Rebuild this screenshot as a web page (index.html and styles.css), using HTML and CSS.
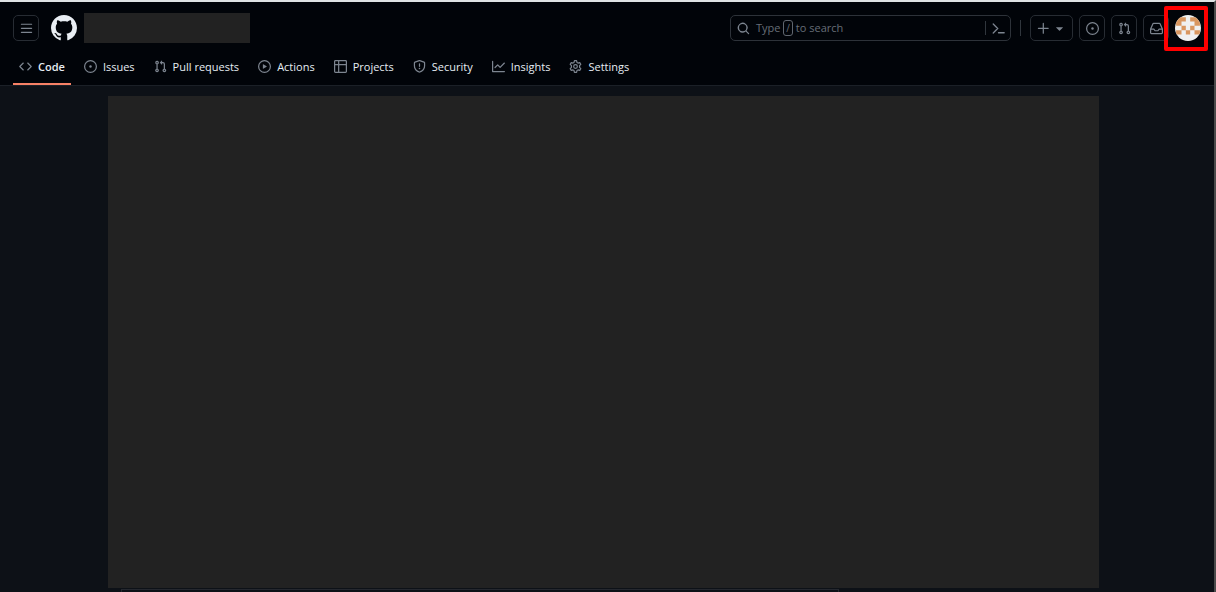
FILE: index.html
```
<!DOCTYPE html>
<html lang="en">
<head>
<meta charset="utf-8">
<title>Repository</title>
<link rel="stylesheet" href="styles.css">
</head>
<body>
<header class="header">
  <div class="topbar">
    <button class="icon-button" aria-label="Open menu"><svg class="icon" viewBox="0 0 16 16"><path d="M1 2.75A.75.75 0 0 1 1.75 2h12.5a.75.75 0 0 1 0 1.5H1.75A.75.75 0 0 1 1 2.75Zm0 5A.75.75 0 0 1 1.75 7h12.5a.75.75 0 0 1 0 1.5H1.75A.75.75 0 0 1 1 7.75ZM1.75 12h12.5a.75.75 0 0 1 0 1.5H1.75a.75.75 0 0 1 0-1.5Z"/></svg></button>
    <a class="logo" href="#" aria-label="Homepage"><svg viewBox="0 0 16 16"><path d="M8 0c4.42 0 8 3.58 8 8a8.013 8.013 0 0 1-5.45 7.59c-.4.08-.55-.17-.55-.38 0-.27.01-1.13.01-2.2 0-.75-.25-1.23-.54-1.48 1.78-.2 3.65-.88 3.65-3.95 0-.88-.31-1.59-.82-2.15.08-.2.36-1.02-.08-2.12 0 0-.67-.22-2.2.82-.64-.18-1.32-.27-2-.27-.68 0-1.36.09-2 .27-1.53-1.03-2.2-.82-2.2-.82-.44 1.1-.16 1.92-.08 2.12-.51.56-.82 1.28-.82 2.15 0 3.06 1.86 3.75 3.64 3.95-.23.2-.44.55-.51 1.07-.46.21-1.61.55-2.33-.66-.15-.24-.6-.83-1.23-.82-.67.01-.27.38.01.53.34.19.73.9.82 1.13.16.45.68 1.31 2.69.94 0 .67.01 1.3.01 1.49 0 .21-.15.45-.55.38A7.995 7.995 0 0 1 0 8c0-4.42 3.58-8 8-8Z"/></svg></a>
    <div class="repo-name"></div>
    <div class="search">
      <button class="search-field" aria-label="Type / to search"><svg class="icon" viewBox="0 0 16 16"><path d="M10.68 11.74a6 6 0 0 1-7.922-8.982 6 6 0 0 1 8.982 7.922l3.04 3.04a.749.749 0 0 1-.326 1.275.749.749 0 0 1-.734-.215ZM11.5 7a4.499 4.499 0 1 0-8.997 0A4.499 4.499 0 0 0 11.5 7Z"/></svg><span class="hint">Type <kbd>/</kbd> to search</span></button>
      <button class="command" aria-label="Command palette"><svg class="icon" viewBox="0 0 16 16"><path d="M1.500 2.500 7 8l-5.500 5.500M8 13.250h7" fill="none" stroke="currentColor" stroke-width="1.600" stroke-linecap="round"/></svg></button>
    </div>
    <span class="divider"></span>
    <div class="actions">
      <button class="icon-button create" aria-label="Create new"><svg class="icon" viewBox="0 0 16 16"><path d="M7.750 1a.75.75 0 0 1 .75.75V7h5.250a.75.75 0 0 1 0 1.500H8.500v5.250a.75.75 0 0 1-1.500 0V8.500H1.750a.75.75 0 0 1 0-1.500H7V1.750A.75.75 0 0 1 7.750 1Z"/></svg><svg class="icon" viewBox="0 0 16 16"><path d="m4 7 3.800 3.800a.3.300 0 0 0 .4 0L12 7a.25.25 0 0 0-.2-.5H4.200A.25.25 0 0 0 4 7Z"/></svg></button>
      <button class="icon-button" aria-label="Issues"><svg class="icon" viewBox="0 0 16 16"><path d="M8 9.500a1.500 1.500 0 1 0 0-3 1.500 1.500 0 0 0 0 3Z"/><path d="M8 0a8 8 0 1 1 0 16A8 8 0 0 1 8 0ZM1.500 8a6.500 6.500 0 1 0 13 0 6.500 6.500 0 0 0-13 0Z"/></svg></button>
      <button class="icon-button" aria-label="Pull requests"><svg class="icon" viewBox="0 0 16 16"><path d="M1.500 3.250a2.250 2.250 0 1 1 3 2.122v5.256a2.251 2.251 0 1 1-1.500 0V5.372A2.250 2.250 0 0 1 1.500 3.250Zm5.677-.177L9.573.677A.25.25 0 0 1 10 .854V2.500h1A2.500 2.500 0 0 1 13.500 5v5.628a2.251 2.251 0 1 1-1.500 0V5a1 1 0 0 0-1-1h-1v1.646a.25.25 0 0 1-.427.177L7.177 3.427a.25.25 0 0 1 0-.354ZM3.750 2.500a.75.75 0 1 0 0 1.500.75.75 0 0 0 0-1.500Zm0 9.500a.75.75 0 1 0 0 1.500.75.75 0 0 0 0-1.500Zm8.250.75a.75.75 0 1 0 1.500 0 .75.75 0 0 0-1.500 0Z"/></svg></button>
      <button class="icon-button" aria-label="Notifications"><svg class="icon" viewBox="0 0 16 16"><path d="M2.800 2.060A1.750 1.750 0 0 1 4.410 1h7.180c.7 0 1.333.417 1.610 1.060l2.740 6.395c.04.093.06.194.06.295v4.500A1.750 1.750 0 0 1 14.250 15H1.750A1.750 1.750 0 0 1 0 13.250v-4.500c0-.101.020-.202.060-.295Zm1.610.44a.25.25 0 0 0-.23.152L1.887 8H4.750a.75.75 0 0 1 .6.300L6.625 10h2.750l1.275-1.700a.75.75 0 0 1 .6-.3h2.863L11.820 2.652a.25.25 0 0 0-.23-.152Zm10.090 7h-2.875l-1.275 1.700a.75.75 0 0 1-.6.300h-3.500a.75.75 0 0 1-.6-.3L4.375 9.500H1.500v3.750c0 .138.112.25.25.25h12.500a.25.25 0 0 0 .25-.25Z"/></svg></button>
    </div>
    <a class="avatar" href="#" aria-label="Profile"><svg viewBox="0 0 12 12"><path fill="#f0f0f0" d="M0 0h12v12H0z"/><path fill="#d9965f" d="M1 1h4v2H1zM7 1h4v2H7zM.5 3H3v2H.5zM9 3h2.500v2H9zM3 5h2v2H3zM7 5h2v2H7zM.5 7H3v2H.5zM5 7h2v2H5zM9 7h2.500v2H9z"/></svg></a>
  </div>
  <nav class="tabs" aria-label="Repository">
    <a class="tab current" href="#" aria-current="page"><svg class="icon" viewBox="0 0 16 16"><path d="m11.280 3.220 4.250 4.250a.75.75 0 0 1 0 1.060l-4.250 4.250a.749.749 0 0 1-1.275-.326.749.749 0 0 1 .215-.734L13.940 8l-3.720-3.720a.749.749 0 0 1 .326-1.275.749.749 0 0 1 .734.215Zm-6.560 0a.751.751 0 0 1 1.042.018.751.751 0 0 1 .018 1.042L2.060 8l3.720 3.720a.749.749 0 0 1-.326 1.275.749.749 0 0 1-.734-.215L.470 8.530a.75.75 0 0 1 0-1.060Z"/></svg>Code</a>
    <a class="tab" href="#"><svg class="icon" viewBox="0 0 16 16"><path d="M8 9.500a1.500 1.500 0 1 0 0-3 1.500 1.500 0 0 0 0 3Z"/><path d="M8 0a8 8 0 1 1 0 16A8 8 0 0 1 8 0ZM1.500 8a6.500 6.500 0 1 0 13 0 6.500 6.500 0 0 0-13 0Z"/></svg>Issues</a>
    <a class="tab" href="#"><svg class="icon" viewBox="0 0 16 16"><path d="M1.500 3.250a2.250 2.250 0 1 1 3 2.122v5.256a2.251 2.251 0 1 1-1.500 0V5.372A2.250 2.250 0 0 1 1.500 3.250Zm5.677-.177L9.573.677A.25.25 0 0 1 10 .854V2.500h1A2.500 2.500 0 0 1 13.500 5v5.628a2.251 2.251 0 1 1-1.500 0V5a1 1 0 0 0-1-1h-1v1.646a.25.25 0 0 1-.427.177L7.177 3.427a.25.25 0 0 1 0-.354ZM3.750 2.500a.75.75 0 1 0 0 1.500.75.75 0 0 0 0-1.500Zm0 9.500a.75.75 0 1 0 0 1.500.75.75 0 0 0 0-1.500Zm8.250.75a.75.75 0 1 0 1.500 0 .75.75 0 0 0-1.500 0Z"/></svg>Pull requests</a>
    <a class="tab" href="#"><svg class="icon" viewBox="0 0 16 16"><path d="M8 0a8 8 0 1 1 0 16A8 8 0 0 1 8 0ZM1.500 8a6.500 6.500 0 1 0 13 0 6.500 6.500 0 0 0-13 0Zm4.879-2.773 4.264 2.559a.25.25 0 0 1 0 .428l-4.264 2.559A.25.25 0 0 1 6 10.559V5.442a.25.25 0 0 1 .379-.215Z"/></svg>Actions</a>
    <a class="tab" href="#"><svg class="icon" viewBox="0 0 16 16"><path d="M0 1.750C0 .784.784 0 1.750 0h12.500C15.216 0 16 .784 16 1.750v12.500A1.750 1.750 0 0 1 14.250 16H1.750A1.750 1.750 0 0 1 0 14.250ZM6.500 6.500v8h7.750a.25.25 0 0 0 .25-.25V6.500Zm8-1.500V1.750a.25.25 0 0 0-.25-.25H6.500V5Zm-13 1.500v7.750c0 .138.112.25.25.25H5v-8ZM5 5V1.500H1.750a.25.25 0 0 0-.25.25V5Z"/></svg>Projects</a>
    <a class="tab" href="#"><svg class="icon" viewBox="0 0 16 16"><path d="M7.467.133a1.748 1.748 0 0 1 1.066 0l5.250 1.680A1.750 1.750 0 0 1 15 3.480V7c0 1.566-.32 3.182-1.303 4.682-.983 1.498-2.585 2.813-5.032 3.855a1.697 1.697 0 0 1-1.330 0c-2.447-1.042-4.049-2.357-5.032-3.855C1.320 10.182 1 8.566 1 7V3.480a1.750 1.750 0 0 1 1.217-1.667Zm.610 1.429a.25.25 0 0 0-.153 0l-5.250 1.680a.25.25 0 0 0-.174.238V7c0 1.358.275 2.666 1.057 3.860.784 1.194 2.121 2.340 4.366 3.297a.196.196 0 0 0 .154 0c2.245-.956 3.582-2.104 4.366-3.298C13.225 9.666 13.500 8.360 13.500 7V3.480a.251.251 0 0 0-.174-.237ZM8.750 4.750v3a.75.75 0 0 1-1.500 0v-3a.75.75 0 0 1 1.500 0ZM9 10.500a1 1 0 1 1-2 0 1 1 0 0 1 2 0Z"/></svg>Security</a>
    <a class="tab" href="#"><svg class="icon" viewBox="0 0 16 16"><path d="M1.500 1.750V13.500h13.750a.75.75 0 0 1 0 1.500H.750a.75.75 0 0 1-.75-.75V1.750a.75.75 0 0 1 1.500 0Zm14.280 2.530-5.250 5.250a.75.75 0 0 1-1.060 0L7 7.060 4.280 9.780a.751.751 0 0 1-1.042-.018.751.751 0 0 1-.018-1.042l3.250-3.250a.75.75 0 0 1 1.060 0L10 7.940l4.720-4.720a.751.751 0 0 1 1.042.018.751.751 0 0 1 .018 1.042Z"/></svg>Insights</a>
    <a class="tab" href="#"><svg class="icon" viewBox="0 0 16 16" fill="none" stroke="currentColor" stroke-width="1.500" stroke-linejoin="round"><path d="M6.700.900h2.600l.5 2.100 1.300.75 2.100-.6 1.300 2.250L13 7v2l1.500 1.600-1.300 2.250-2.100-.6-1.300.75-.5 2.100H6.700L6.200 13l-1.300-.75-2.100.6-1.300-2.250L3 9V7L1.500 5.400l1.300-2.250 2.100.6L6.200 3Z"/><circle cx="8" cy="8" r="2.250"/></svg>Settings</a>
  </nav>
</header>
<main class="content">
  <div class="panel"></div>
  <div class="next-panel"></div>
</main>
</body>
</html>
```
FILE: styles.css
```
* {
  box-sizing: border-box;
}

body {
  display: flex;
  flex-direction: column;
  min-height: 100vh;
  margin: 0;
  border-top: 2px solid #dfe3e4;
  border-right: 2px solid #4b4b4b;
  background: #0d1117;
  color: #e6edf3;
  font: 11px/18px "Open Sans", sans-serif;
}

button {
  padding: 0;
  border: 0;
  background: none;
  color: inherit;
  font: inherit;
  cursor: pointer;
}

.header {
  border-bottom: 1px solid #1b2027;
  background: #010409;
}

.topbar {
  display: flex;
  align-items: center;
  padding: 11px 13px 0;
}

.icon {
  flex: none;
  width: 13px;
  height: 13px;
  fill: currentColor;
}

.icon[fill="none"] {
  fill: none;
}

.icon-button {
  display: flex;
  flex: none;
  align-items: center;
  justify-content: center;
  width: 26px;
  height: 26px;
  border: 1px solid #272c33;
  border-radius: 5px;
  color: #7d8590;
}

.create {
  gap: 3px;
  width: 43px;
}

.logo {
  width: 26px;
  height: 26px;
  margin: 0 7px 0 12px;
}

.logo svg {
  display: block;
  fill: #e9eef3;
}

.repo-name {
  width: 166px;
  height: 30px;
  background: #222;
}

.search {
  display: flex;
  width: 281px;
  height: 26px;
  margin-left: auto;
  border: 1px solid #2d3239;
  border-radius: 5px;
  color: #7d8590;
}

.search-field {
  display: flex;
  flex: 1;
  align-items: center;
  gap: 6px;
  padding-left: 6px;
}

.hint {
  color: #666d77;
}

kbd {
  padding: 0 2px;
  border: 1px solid #60666f;
  border-radius: 3px;
  font: inherit;
  font-size: 10px;
  line-height: 10px;
}

.command {
  display: flex;
  align-items: center;
  justify-content: center;
  width: 25px;
  height: 14px;
  margin-top: 5px;
  border-left: 1px solid #30363d;
}

.divider {
  width: 1px;
  height: 16px;
  margin: 0 9px;
  background: #30363d;
}

.actions {
  display: flex;
  gap: 6px;
}

.avatar {
  position: relative;
  width: 26px;
  height: 26px;
  margin-left: 6px;
}

.avatar svg {
  display: block;
  border-radius: 50%;
}

.avatar::after {
  position: absolute;
  inset: -9px -7px -10px -11px;
  border: 4px solid #f00;
  border-radius: 2px;
  content: "";
}

.tabs {
  display: flex;
  gap: 7px;
  padding: 7px 13px 0;
}

.tab {
  display: flex;
  align-items: center;
  gap: 6px;
  height: 35px;
  padding: 0 6px;
  border-bottom: 2px solid transparent;
  color: inherit;
  text-decoration: none;
}

.tab .icon {
  color: #7d8590;
}

.current {
  border-color: #f78166;
  font-weight: 600;
}

.content {
  display: flex;
  flex: 1;
  flex-direction: column;
  padding: 10px 115px 0 108px;
}

.panel {
  flex: 1;
  background: #222;
}

.next-panel {
  width: 718px;
  height: 3px;
  margin: 1px 0 0 13px;
  border: 1px solid #25282f;
  border-bottom: 0;
}
```
